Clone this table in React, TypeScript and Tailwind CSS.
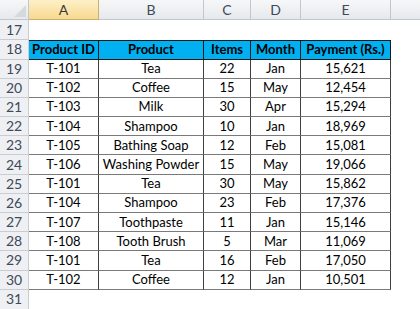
import React from "react";

const rows: [number, string, string, string, string, string][] = [
  [19, "T-101", "Tea", "22", "Jan", "15,621"],
  [20, "T-102", "Coffee", "15", "May", "12,454"],
  [21, "T-103", "Milk", "30", "Apr", "15,294"],
  [22, "T-104", "Shampoo", "10", "Jan", "18,969"],
  [23, "T-105", "Bathing Soap", "12", "Feb", "15,081"],
  [24, "T-106", "Washing Powder", "15", "May", "19,066"],
  [25, "T-101", "Tea", "30", "May", "15,862"],
  [26, "T-104", "Shampoo", "23", "Feb", "17,376"],
  [27, "T-107", "Toothpaste", "11", "Jan", "15,146"],
  [28, "T-108", "Tooth Brush", "5", "Mar", "11,069"],
  [29, "T-101", "Tea", "16", "Feb", "17,050"],
  [30, "T-102", "Coffee", "12", "Jan", "10,501"],
];

function RowHead({ n, h }: { n: number; h: string }) {
  return (
    <div
      className={`${h} w-[29px] shrink-0 flex items-center justify-center bg-[#eef0f3] border-r border-b border-[#c9cdd2] text-[#3f4a57] text-[14px] font-normal leading-none`}
    >
      {n}
    </div>
  );
}

export default function App() {
  const cell = "flex items-center justify-center border-r border-[#404040] border-b";
  return (
    <div
      className="w-[420px] h-[309px] overflow-hidden bg-white text-black"
      style={{ fontFamily: "Lato, 'Liberation Sans', sans-serif" }}
    >
      {/* column header */}
      <div className="flex h-[20px] text-[14px] text-[#3f4a57] leading-none">
        <div className="w-[29px] shrink-0 relative bg-gradient-to-b from-[#f6f7f8] to-[#e6e9ec] border-r border-b border-[#c2c7cd]">
          <svg className="absolute right-[2px] bottom-[2px]" width="12" height="12" viewBox="0 0 12 12">
            <polygon points="12,0 12,12 0,12" fill="#d5d8dc" />
          </svg>
        </div>
        <div className="w-[70px] shrink-0 flex items-center justify-center bg-gradient-to-b from-[#fdf0c8] to-[#f8d98e] border-r border-b border-[#c8b070] text-[#3a3a3a]">
          A
        </div>
        <div className="w-[105px] shrink-0 flex items-center justify-center bg-gradient-to-b from-[#f6f7f8] to-[#e6e9ec] border-r border-b border-[#c2c7cd]">
          B
        </div>
        <div className="w-[47px] shrink-0 flex items-center justify-center bg-gradient-to-b from-[#f6f7f8] to-[#e6e9ec] border-r border-b border-[#c2c7cd]">
          C
        </div>
        <div className="w-[50px] shrink-0 flex items-center justify-center bg-gradient-to-b from-[#f6f7f8] to-[#e6e9ec] border-r border-b border-[#c2c7cd]">
          D
        </div>
        <div className="w-[90px] shrink-0 flex items-center justify-center bg-gradient-to-b from-[#f6f7f8] to-[#e6e9ec] border-r border-b border-[#c2c7cd]">
          E
        </div>
        <div className="w-[29px] shrink-0 bg-gradient-to-b from-[#f6f7f8] to-[#e6e9ec] border-b border-[#c2c7cd]" />
      </div>

      {/* row 17 */}
      <div className="flex">
        <RowHead n={17} h="h-[20px]" />
      </div>

      {/* row 18 header */}
      <div className="flex h-[19.5px] text-[13px] font-bold leading-none">
        <RowHead n={18} h="h-[19.5px]" />
        <div className="w-[70px] shrink-0 flex items-center justify-center bg-[#00b0f0] border-r border-b border-t border-[#1a1a1a]">
          Product ID
        </div>
        <div className="w-[105px] shrink-0 flex items-center justify-center bg-[#00b0f0] border-r border-b border-t border-[#1a1a1a]">
          Product
        </div>
        <div className="w-[47px] shrink-0 flex items-center justify-center bg-[#00b0f0] border-r border-b border-t border-[#1a1a1a]">
          Items
        </div>
        <div className="w-[50px] shrink-0 flex items-center justify-center bg-[#00b0f0] border-r border-b border-t border-[#1a1a1a]">
          Month
        </div>
        <div className="w-[90px] shrink-0 flex items-center justify-center bg-[#00b0f0] border-r border-b border-t border-[#1a1a1a]">
          Payment (Rs.)
        </div>
      </div>

      {rows.map((r) => (
        <div key={r[0]} className="flex h-[19.2px] text-[13px] leading-none">
          <RowHead n={r[0]} h="h-[19.2px]" />
          <div className={`w-[70px] shrink-0 ${cell} border-b-[#7a7a7a]`}>{r[1]}</div>
          <div className={`w-[105px] shrink-0 ${cell} border-b-[#7a7a7a]`}>{r[2]}</div>
          <div className={`w-[47px] shrink-0 ${cell} border-b-[#7a7a7a]`}>{r[3]}</div>
          <div className={`w-[50px] shrink-0 ${cell} border-b-[#7a7a7a]`}>{r[4]}</div>
          <div className={`w-[90px] shrink-0 ${cell} border-b-[#7a7a7a]`}>{r[5]}</div>
        </div>
      ))}

      <div className="flex">
        <RowHead n={31} h="h-[20px]" />
      </div>
    </div>
  );
}
